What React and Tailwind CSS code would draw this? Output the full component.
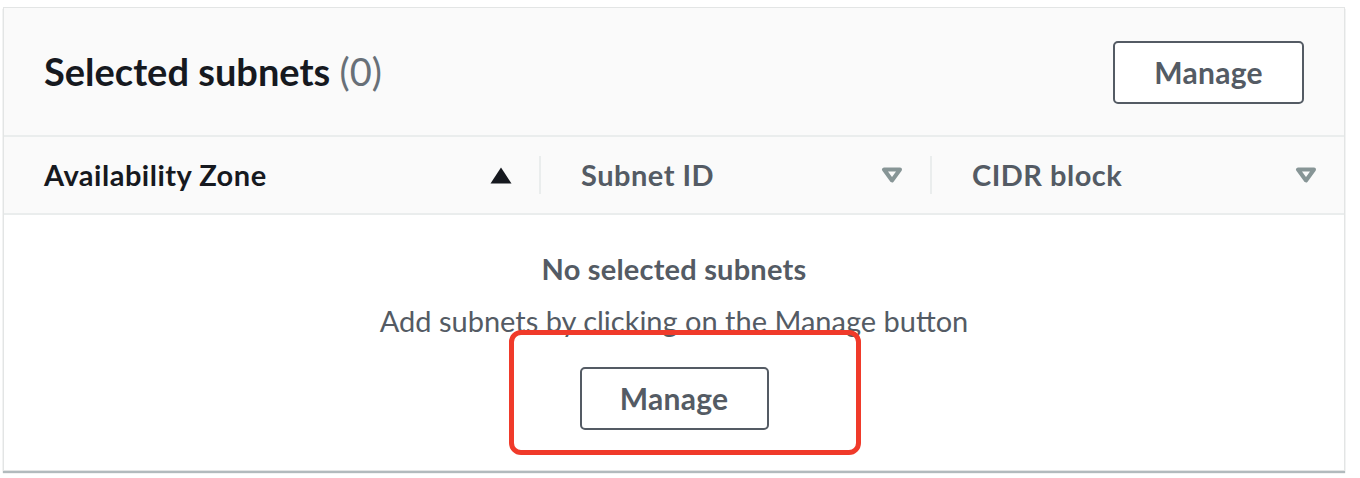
import React from 'react';

const SortUp = () => (
  <svg width="22" height="17" viewBox="0 0 22 17" className="shrink-0">
    <path d="M11 0.5 L21.5 16.5 L0.5 16.5 Z" fill="#16191f" />
  </svg>
);

const SortDown = () => (
  <svg width="22" height="16" viewBox="0 0 22 16" className="shrink-0">
    <path d="M3 2.5 L19 2.5 L11 13.5 Z" fill="none" stroke="#879596" strokeWidth="4" strokeLinejoin="round" />
  </svg>
);

const ManageButton = ({ className }) => (
  <button
    className={`flex items-center justify-center rounded-[5px] border-2 border-[#545b64] bg-white text-[30px] font-bold tracking-[0.3px] text-[#545b64] ${className}`}
  >
    Manage
  </button>
);

const App = () => {
  const columns = [
    { label: 'Availability Zone', active: true },
    { label: 'Subnet ID', active: false },
    { label: 'CIDR block', active: false },
  ];

  return (
    <div className="h-[478px] w-[1360px] bg-white pl-[3px] pt-[7px]" style={{ fontFamily: 'Lato, "Open Sans", sans-serif' }}>
      <div className="relative w-[1342px] border border-[#e3e5e5] bg-white shadow-[0_2px_1px_rgba(0,28,36,0.3)]">
        {/* header */}
        <div className="flex h-[129px] items-center justify-between border-b-2 border-[#eaeded] bg-[#fafafa] pl-[40px] pr-[40px]">
          <h2 className="text-[38px] font-bold text-[#16191f]">
            Selected subnets <span className="font-normal text-[#687078]">(0)</span>
          </h2>
          <ManageButton className="mt-[2px] h-[63px] w-[191px]" />
        </div>

        {/* table head */}
        <div className="grid h-[78px] grid-cols-[537px_391px_1fr] border-b-2 border-[#eaeded] bg-[#fafafa]">
          {columns.map((col, i) => (
            <div key={col.label} className="flex items-center">
              <div className="flex flex-1 items-center justify-between pl-[40px] pr-[27px]">
                <span className={`text-[29px] font-bold leading-[36px] tracking-[0.5px] ${col.active ? 'text-[#16191f]' : 'text-[#545b64]'}`}>
                  {col.label}
                </span>
                {col.active ? <SortUp /> : <SortDown />}
              </div>
              {i < columns.length - 1 && <div className="h-[38px] w-[2px] bg-[#eaeded]" />}
            </div>
          ))}
        </div>

        {/* empty state */}
        <div className="flex h-[255px] flex-col items-center pt-[36px] text-[#545b64]">
          <div className="text-[29px] font-bold leading-[36px] tracking-[0.2px]">No selected subnets</div>
          <div className="mt-[16px] text-[29px] leading-[36px]">Add subnets by clicking on the Manage button</div>
          <ManageButton className="mt-[28px] h-[63px] w-[189px]" />
        </div>

        {/* annotation */}
        <div className="pointer-events-none absolute left-[505px] top-[322px] h-[125px] w-[352px] rounded-[12px] border-[5px] border-[#f03a2a]" />
      </div>
    </div>
  );
};

export default App;
